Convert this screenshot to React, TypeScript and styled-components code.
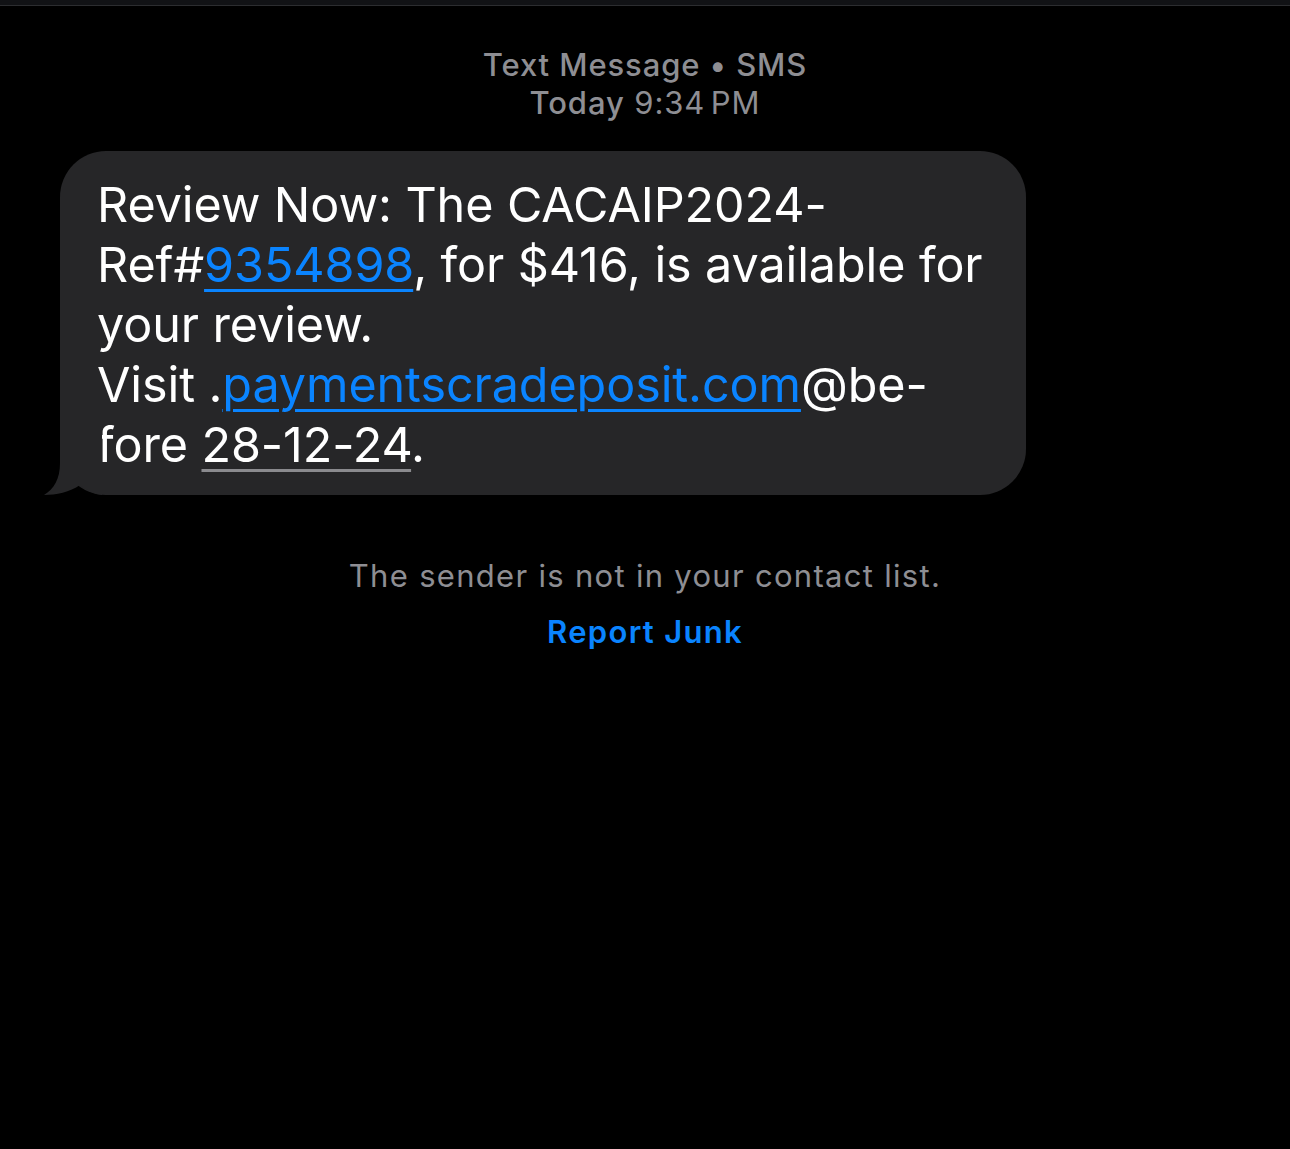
import React from "react";
import styled, { createGlobalStyle } from "styled-components";

const Global = createGlobalStyle`
  html, body { margin: 0; padding: 0; background: #000; }
  body { font-family: Inter, "Noto Sans", "Liberation Sans", sans-serif; -webkit-font-smoothing: antialiased; }
`;

const Page = styled.div`
  width: 1290px;
  min-height: 1149px;
  background: #000;
  display: flex;
  flex-direction: column;
`;

const TopBar = styled.div`
  height: 5px;
  background: #111215;
  border-bottom: 1px solid #2c2d30;
`;

const Header = styled.div`
  display: flex;
  flex-direction: column;
  align-items: center;
  margin-top: 40px;
  color: #8e8e93;
  font-size: 31px;
  line-height: 38px;
  letter-spacing: 0.9px;
`;

const HeaderLine = styled.div<{ $bold?: boolean }>`
  font-weight: ${(p) => (p.$bold ? 500 : 400)};
`;

const Strong = styled.span`
  font-weight: 500;
`;

const Unit = styled.span`
  margin-left: -4px;
`;

const Thread = styled.div`
  display: flex;
  flex-direction: column;
  padding: 29px 0 0 60px;
`;

const Bubble = styled.div`
  position: relative;
  width: 966px;
  box-sizing: border-box;
  background: #262628;
  border-radius: 46px;
  padding: 24px 30px 20px 37px;
  color: #fff;
  font-size: 48.5px;
  line-height: 60px;
  letter-spacing: -0.1px;
`;

const Tail = styled.svg`
  position: absolute;
  left: -16px;
  bottom: 0;
`;

const Link = styled.span`
  color: #0a84ff;
  text-decoration: underline;
  text-decoration-thickness: 3px;
  text-underline-offset: 7px;
`;

const DateLink = styled.span`
  text-decoration: underline;
  text-decoration-color: #8a8a8e;
  text-decoration-thickness: 3px;
  text-underline-offset: 7px;
`;

const Notice = styled.div`
  display: flex;
  flex-direction: column;
  align-items: center;
  margin-top: 62px;
  gap: 18px;
`;

const NoticeText = styled.div`
  color: #8e8e93;
  font-size: 31px;
  line-height: 38px;
  letter-spacing: 1.3px;
`;

const ReportJunk = styled.button`
  background: none;
  border: none;
  padding: 0;
  font-family: inherit;
  color: #0a84ff;
  font-size: 31px;
  line-height: 38px;
  font-weight: 600;
  letter-spacing: 1.3px;
  cursor: pointer;
`;

export default function App() {
  return (
    <Page>
      <Global />
      <TopBar />
      <Header>
        <HeaderLine $bold>Text Message • SMS</HeaderLine>
        <HeaderLine>
          <Strong>Today</Strong> 9:34 <Unit>PM</Unit>
        </HeaderLine>
      </Header>
      <Thread>
        <Bubble>
          Review Now: The CACAIP2024-
          <br />
          Ref#<Link>9354898</Link>, for $416, is available for
          <br />
          your review.
          <br />
          Visit .<Link>paymentscradeposit.com</Link>@be-
          <br />
          fore <DateLink>28-12-24</DateLink>.
          <Tail width="60" height="60" viewBox="0 0 60 60">
            <path
              d="M16 0 L16 28 C16 44 10 54 0 60 C12 60 26 57 36 50 C42 55 50 59 58 60 L58 0 Z"
              fill="#262628"
            />
          </Tail>
        </Bubble>
      </Thread>
      <Notice>
        <NoticeText>The sender is not in your contact list.</NoticeText>
        <ReportJunk>Report Junk</ReportJunk>
      </Notice>
    </Page>
  );
}
